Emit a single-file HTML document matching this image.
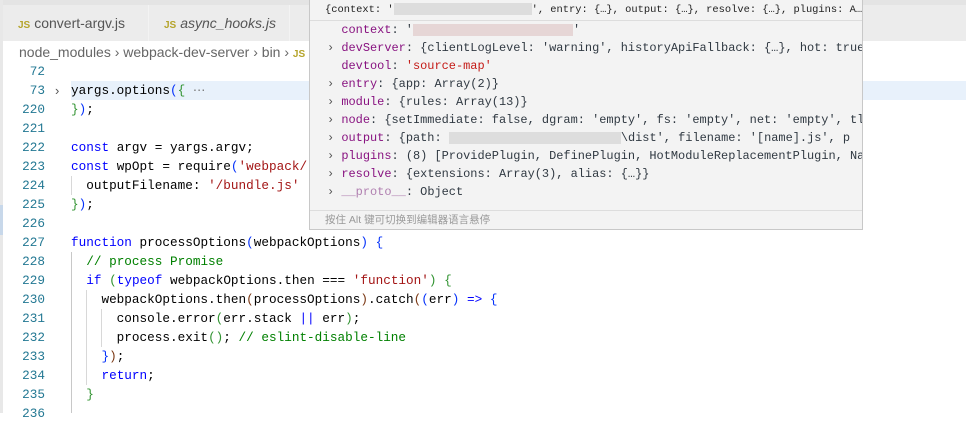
<html><head><style>
body{margin:0;width:966px;height:413px;overflow:hidden;background:#fff;position:relative;font-family:"Liberation Sans",sans-serif}
.ln{position:absolute;left:0;width:45px;text-align:right;color:#237893;font-family:"Liberation Mono",monospace;font-size:12.7px;line-height:19px}
.code{position:absolute;left:71px;white-space:pre;color:#000;font-family:"Liberation Mono",monospace;font-size:12.7px;line-height:19px}
.k{color:#0000ff}.s{color:#a31515}.c{color:#008000}.b1{color:#0431fa}.b2{color:#319331}.b3{color:#7b3814}
.pop{position:absolute;left:309px;top:0;width:552px;height:229px;background:#f3f3f3;border:1px solid #c8c8c8;border-top:none;font-family:"Liberation Mono",monospace;font-size:11.95px;color:#303942;white-space:pre;overflow:hidden}
.pl{position:absolute;left:17px;line-height:18px}
.p{color:#881280}.ps{color:#c41a16}
.blur{display:inline-block;height:12px;background:#ddd;vertical-align:middle}
</style></head><body>
<div style="position:absolute;left:0;top:0;width:966px;height:5px;background:#e4e4e4"></div>
<div style="position:absolute;left:0;top:5px;width:966px;height:36px;background:#ececec"></div>
<div style="position:absolute;left:3px;top:5px;width:145px;height:36px;background:#ececec;border-right:1px solid #f3f3f3;font-size:14px;color:#555;line-height:36px"><span style="color:#b5a42a;font-weight:bold;font-size:10px;margin:0 4px 0 15px">JS</span>convert-argv.js</div>
<div style="position:absolute;left:149px;top:5px;width:140px;height:36px;background:#ececec;border-right:1px solid #f3f3f3;font-size:14px;color:#555;line-height:36px"><span style="color:#b5a42a;font-weight:bold;font-size:10px;margin:0 4px 0 15px">JS</span><i>async_hooks.js</i></div>
<div style="position:absolute;left:0;top:41px;width:966px;height:22px;font-size:14px;color:#666;line-height:22px;padding-left:19px">node_modules › webpack-dev-server › bin › <span style="color:#b5a42a;font-weight:bold;font-size:10px">JS</span> w</div>
<div style="position:absolute;left:0;top:0;width:3px;height:413px;background:#e8e8e8"></div>
<div style="position:absolute;left:71px;top:81px;width:895px;height:19px;background:#e8f1fb"></div>
<div style="position:absolute;left:0;top:205px;width:3px;height:30px;background:#c8d8ea"></div>
<div class="ln" style="top:62px">72<br>73<br>220<br>221<br>222<br>223<br>224<br>225<br>226<br>227<br>228<br>229<br>230<br>231<br>232<br>233<br>234<br>235<br>236</div>
<div style="position:absolute;left:55px;top:81px;color:#555;font-size:13px;line-height:19px">›</div>
<div style="position:absolute;left:71px;top:252px;width:1px;height:161px;background:#c8c8c8"></div>
<div style="position:absolute;left:86px;top:290px;width:1px;height:95px;background:#d8d8d8"></div>
<div style="position:absolute;left:101px;top:309px;width:1px;height:38px;background:#d8d8d8"></div>
<div style="position:absolute;left:71px;top:176px;width:1px;height:19px;background:#d8d8d8"></div>
<div class="code" style="top:81px">yargs.options<span class="b1">(</span><span class="b2">{</span><span style="color:#777"> ⋯</span>
<span class="b2">}</span><span class="b1">)</span>;

<span class="k">const</span> argv = yargs.argv;
<span class="k">const</span> wpOpt = require<span class="b1">(</span><span class="s">'webpack/</span>
  outputFilename: <span class="s">'/bundle.js'</span>
<span class="b2">}</span><span class="b1">)</span>;

<span class="k">function</span> processOptions<span class="b1">(</span>webpackOptions<span class="b1">)</span> <span class="b1">{</span>
  <span class="c">// process Promise</span>
  <span class="k">if</span> <span class="b2">(</span><span class="k">typeof</span> webpackOptions.then === <span class="s">'function'</span><span class="b2">)</span> <span class="b2">{</span>
    webpackOptions.then<span class="b3">(</span>processOptions<span class="b3">)</span>.catch<span class="b3">(</span><span class="b1">(</span>err<span class="b1">)</span> <span class="k">=&gt;</span> <span class="b1">{</span>
      console.error<span class="b2">(</span>err.stack <span class="k">||</span> err<span class="b2">)</span>;
      process.exit<span class="b2">()</span>; <span class="c">// eslint-disable-line</span>
    <span class="b1">}</span><span class="b3">)</span>;
    <span class="k">return</span>;
  <span class="b2">}</span>
</div>
<div class="pop">
<div style="position:absolute;left:0;top:0;width:552px;height:20px;background:#f3f3f3;border-bottom:1px solid #ddd"></div>
<div class="pl" style="top:1px;left:15px;color:#222;font-size:10.4px">{context: '<span class="blur" style="width:138px"></span>', entry: {…}, output: {…}, resolve: {…}, plugins: A…</div>
<div class="pl" style="top:21px">  <span class="p">context</span>: '<span class="blur" style="width:160px;background:#e6d6d6"></span>'
<span style="color:#555">›</span> <span class="p">devServer</span>: {clientLogLevel: 'warning', historyApiFallback: {…}, hot: true
  <span class="p">devtool</span>: <span class="ps">'source-map'</span>
<span style="color:#555">›</span> <span class="p">entry</span>: {app: Array(2)}
<span style="color:#555">›</span> <span class="p">module</span>: {rules: Array(13)}
<span style="color:#555">›</span> <span class="p">node</span>: {setImmediate: false, dgram: 'empty', fs: 'empty', net: 'empty', tl
<span style="color:#555">›</span> <span class="p">output</span>: {path: <span class="blur" style="width:172px"></span>\dist', filename: '[name].js', p
<span style="color:#555">›</span> <span class="p">plugins</span>: (8) [ProvidePlugin, DefinePlugin, HotModuleReplacementPlugin, Na
<span style="color:#555">›</span> <span class="p">resolve</span>: {extensions: Array(3), alias: {…}}
<span style="color:#555">›</span> <span style="color:#b07fb0">__proto__</span>: Object</div>
<div style="position:absolute;left:0;top:210px;width:552px;height:1px;background:#ddd"></div>
<div style="position:absolute;left:15px;top:212px;font-family:'Liberation Sans','Noto Sans CJK SC',sans-serif;font-size:10.5px;color:#999;line-height:16px">按住 Alt 键可切换到编辑器语言悬停</div>
</div>
</body></html>
